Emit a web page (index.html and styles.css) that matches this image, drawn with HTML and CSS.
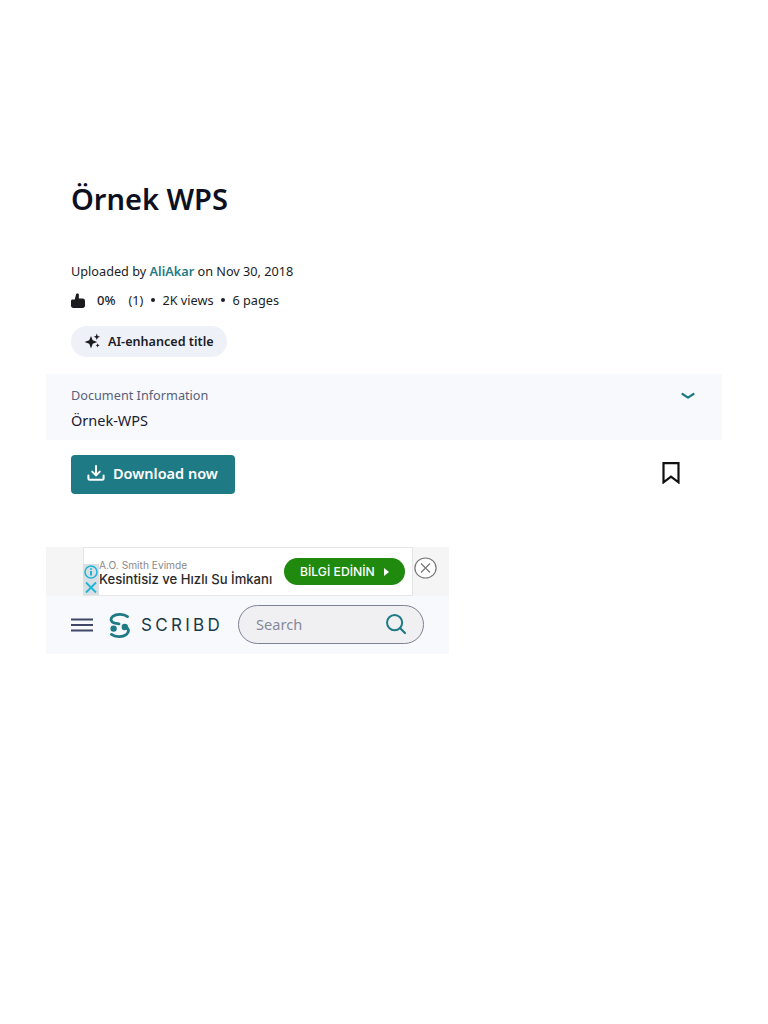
FILE: index.html
```html
<!DOCTYPE html>
<html lang="en">
  <head>
    <meta charset="utf-8">
    <title>Örnek WPS</title>
    <link rel="stylesheet" href="styles.css">
  </head>
  <body>
    <div id="content">
      <div class="head">
        <h1>Örnek WPS</h1>
        <p class="uploaded">Uploaded by <a href="#">AliAkar</a> on Nov 30, 2018</p>
        <div class="stats">
          <svg class="thumb" width="14" height="15" viewBox="0 0 14 15"><path d="M1.6 6.4H3.8L5 1.4C5.2.4 7.8.2 7.9 1.8L7.8 5.6H11.6C13.2 5.6 14 6.6 14 8V12.6C14 14 13.1 15 11.6 15H2.4C.9 15 0 14 0 12.6V8C0 7 .6 6.4 1.6 6.4Z" fill="#1a1a1f"/></svg>
          <b class="pct">0%</b>
          <span class="count">(1)</span>
          <span class="dot"></span>
          <span>2K views</span>
          <span class="dot"></span>
          <span>6 pages</span>
        </div>
        <div class="pill">
          <svg width="17" height="17" viewBox="0 0 17 17"><path d="M7 3 8.7 7.3 13.2 9 8.7 10.7 7 15.4 5.3 10.7 .6 9 5.3 7.3ZM12.8.6 13.7 2.9 16 3.8 13.7 4.7 12.8 7 11.9 4.7 9.7 3.8 11.9 2.9ZM13.6 10.2 14.2 11.7 15.7 12.2 14.2 12.9 13.6 14.4 13 12.9 11.6 12.2 13 11.7Z" fill="#1a1a1f"/></svg>
          AI-enhanced title
        </div>
      </div>

      <div class="info">
        <div>
          <div class="info-label">Document Information</div>
          <div class="info-name">Örnek-WPS</div>
        </div>
        <svg class="chev" width="14" height="8" viewBox="0 0 14 8"><path d="M1.5 2 7 5.6 12.5 2" fill="none" stroke="#1e7b85" stroke-width="2.2" stroke-linecap="round" stroke-linejoin="round"/></svg>
      </div>

      <div class="actions">
        <a class="download" href="#">
          <svg width="18" height="16" viewBox="0 0 18 16"><path d="M9 1V10M5.2 6.6 9 10.4 12.8 6.6M1.4 10.4V13.2C1.4 14.1 2 14.7 2.9 14.7H15.1C16 14.7 16.6 14.1 16.6 13.2V10.4" fill="none" stroke="#fff" stroke-width="2" stroke-linecap="round" stroke-linejoin="round"/></svg>
          Download now
        </a>
        <svg class="bookmark" width="18" height="22" viewBox="0 0 18 22"><path d="M1.5 1.2H16.5V20.3L9 14.6 1.5 20.3Z" fill="none" stroke="#111" stroke-width="2.2"/></svg>
      </div>

      <div class="ad-wrap">
        <div class="ad-strip">
          <div class="ad">
            <div class="ad-btns">
              <svg width="16" height="16" viewBox="0 0 16 16"><circle cx="8" cy="8" r="6" fill="none" stroke="#1eb4d8" stroke-width="1.5"/><path d="M8 4.2V5.8M8 7V11.6" stroke="#1eb4d8" stroke-width="2"/></svg>
              <svg width="16" height="15" viewBox="0 0 16 15"><path d="M3 2.5 13 12.5M13 2.5 3 12.5" stroke="#1eb4d8" stroke-width="1.8"/></svg>
            </div>
            <div class="ad-text">
              <div class="ad-brand">A.O. Smith Evimde</div>
              <div class="ad-line">Kesintisiz ve Hızlı Su İmkanı</div>
            </div>
            <div class="ad-cta">BİLGİ EDİNİN <span class="tri"></span></div>
          </div>
          <svg class="ad-close" width="23" height="22" viewBox="0 0 23 22"><ellipse cx="11.5" cy="11" rx="10.6" ry="10" fill="#fff" stroke="#777" stroke-width="1.2"/><path d="M7 6.5 16 15.5M16 6.5 7 15.5" stroke="#777" stroke-width="1.2"/></svg>
        </div>
        <nav class="nav">
          <svg class="burger" width="22" height="14" viewBox="0 0 22 14"><path d="M0 1.5H22M0 7H22M0 12.5H22" stroke="#3f4668" stroke-width="1.8"/></svg>
          <a class="logo" href="#">
            <svg width="21" height="25" viewBox="0 0 21 25"><path d="M18.5 3.6C15 .8 7.5.6 3.8 3.4 .8 5.8 1.8 9.4 6 10.2L10 10.8" fill="none" stroke="#1e7b85" stroke-width="2.8" stroke-linecap="round"/><path d="M2.5 21.4C6 24.2 13.5 24.4 17.2 21.6 20.2 19.2 19.6 16.6 18.4 15" fill="none" stroke="#1e7b85" stroke-width="2.8" stroke-linecap="round"/><circle cx="4.6" cy="15.6" r="3.2" fill="#1e7b85"/><circle cx="15.8" cy="14" r="3.2" fill="#1e7b85"/></svg>
            <span class="wordmark">SCRIBD</span>
          </a>
          <div class="search">
            <span>Search</span>
            <svg width="22" height="22" viewBox="0 0 22 22"><circle cx="9.6" cy="9.6" r="7.6" fill="none" stroke="#1e7b85" stroke-width="2"/><path d="M15.2 15.2 20 20" stroke="#1e7b85" stroke-width="2.2" stroke-linecap="round"/></svg>
          </div>
        </nav>
      </div>
    </div>
  </body>
</html>
```

FILE: styles.css
```css
body { margin:0; background:#fff; color:#1c1c24; font:14px "Noto Sans",sans-serif; }
a { text-decoration:none; }
svg { display:block; flex:none; }
#content { padding:177px 46px 0; }

.head { padding:0 25px; }
h1 { margin:0; font-size:29px; line-height:44px; font-weight:600; color:#0c1020; }
.uploaded { margin:41px 0 0; font-size:12.7px; line-height:18px; }
.uploaded a { color:#1e7b85; font-weight:600; }
.stats { display:flex; align-items:center; margin-top:11px; height:18px; font-size:12.7px; }
.thumb { margin-right:12px; }
.pct { font-weight:500; margin-right:13px; font-size:13px; }
.dot { width:4px; height:4px; margin:0 7px 1px 8px; border-radius:50%; background:#1c1c24; }
.pill { display:inline-flex; align-items:center; gap:7px; height:31px; margin-top:17px; padding:0 13px; border-radius:16px; background:#eff1f8; font-size:12.6px; font-weight:600; }

.info { display:flex; justify-content:space-between; margin-top:17px; height:66px; padding:0 27px 0 25px; background:#f8f9fd; }
.info-label { margin-top:12px; font-size:12.7px; line-height:18px; color:#57617a; }
.info-name { margin-top:6px; font-size:14.5px; line-height:20px; color:#1c2033; }
.chev { margin-top:18px; }

.actions { display:flex; justify-content:space-between; align-items:center; margin-top:15px; padding:0 42px 0 25px; }
.download { display:flex; align-items:center; gap:8px; box-sizing:border-box; width:164px; height:39px; padding:0 0 3px 16px; border-radius:4px; background:#1e7b85; color:#fff; font-size:14.5px; font-weight:600; }
.bookmark { margin-bottom:4px; }

.ad-wrap { width:403px; margin-top:53px; }
.ad-strip { display:flex; align-items:center; height:49px; padding-left:37px; background:#f5f5f5; }
.ad { position:relative; display:flex; align-items:center; box-sizing:border-box; width:330px; height:49px; border:1px solid #e6e6e6; background:#fff; }
.ad-btns { position:absolute; left:-1px; bottom:0; background:#d9dfe2; }
.ad-text { margin:4px 0 0 15px; width:185px; font-family:Inter,sans-serif; }
.ad-brand { font-size:10.2px; line-height:11px; color:#8a8a8a; }
.ad-line { font-size:13.1px; line-height:16px; font-weight:500; color:#2a2a2a; white-space:nowrap; }
.ad-cta { display:flex; align-items:center; gap:9px; height:27px; padding:0 16px; border-radius:14px; background:#1f8a0e; color:#fff; font:500 12.2px Inter,sans-serif; white-space:nowrap; }
.tri { border-left:5px solid #fff; border-top:4.5px solid transparent; border-bottom:4.5px solid transparent; }
.ad-close { margin:0 0 7px 1px; }

.nav { display:flex; align-items:center; height:58px; padding-left:25px; background:#f8f9fd; }
.logo { display:flex; align-items:center; gap:11px; margin-left:16px; }
.wordmark { font:400 17px Inter,sans-serif; letter-spacing:3.3px; color:#1a3a4a; }
.search { display:flex; align-items:center; justify-content:space-between; box-sizing:border-box; width:186px; height:39px; margin:0 0 2px 15px; padding:0 16px 0 17px; border:1px solid #7d8296; border-radius:20px; background:#f0f0f2; color:#858a9a; font-size:14.6px; }
```
